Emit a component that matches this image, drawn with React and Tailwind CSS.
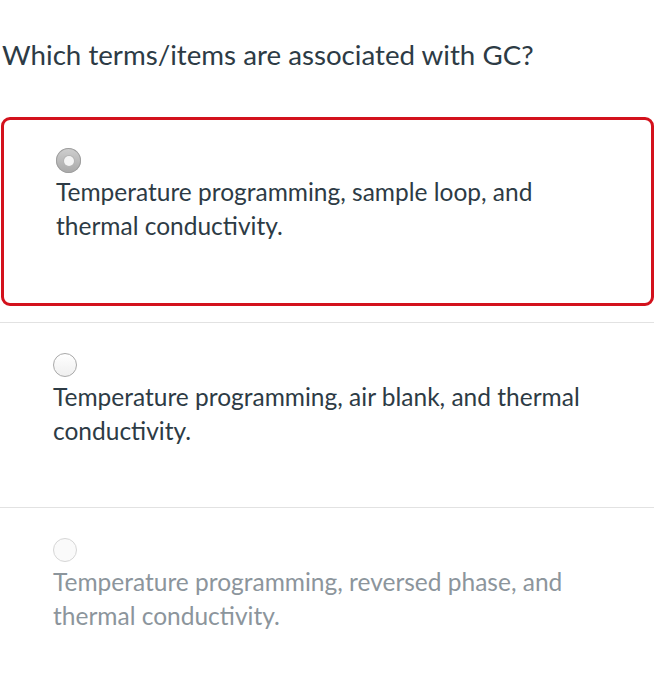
const answers = [
  { id: "a1", text: "Temperature programming, sample loop, and thermal conductivity.", state: "selected" },
  { id: "a2", text: "Temperature programming, air blank, and thermal conductivity.", state: "normal" },
  { id: "a3", text: "Temperature programming, reversed phase, and thermal conductivity.", state: "disabled" },
];

const Radio = ({ state }) => {
  if (state === "selected") {
    return (
      <div className="w-[25px] h-[25px] rounded-full bg-gradient-to-b from-[#cfcfcf] to-[#a9a9a9] flex items-center justify-center shadow-[inset_0_0_0_1px_#9e9e9e]">
        <div className="w-[10px] h-[10px] rounded-full bg-[#f4f4f4] shadow-[0_0_0_1px_#b5b5b5]" />
      </div>
    );
  }
  return (
    <div
      className={
        state === "disabled"
          ? "w-[24px] h-[24px] rounded-full bg-[#fafafa] border border-[#d6d6d6]"
          : "w-[24px] h-[24px] rounded-full bg-gradient-to-b from-white to-[#efefef] border border-[#a9a9a9]"
      }
    />
  );
};

export default function App() {
  return (
    <div className="w-[664px] min-h-[700px] bg-white font-['Lato','Open_Sans',sans-serif] text-[#2d3b45]">
      <h1 className="pl-[2px] pt-[35px] text-[27.7px] leading-[40px] font-normal">
        Which terms/items are associated with GC?
      </h1>

      <div className="mt-[42px] w-[654px]">
        {answers.map((a) =>
          a.state === "selected" ? (
            <div key={a.id} className="ml-[1px] mb-[16px] border-[3px] border-[#d3111c] rounded-[9px] pl-[52px] pt-[28px] pb-[60px]">
              <Radio state={a.state} />
              <p className="mt-[2px] pr-[90px] text-[24.5px] leading-[34px]">{a.text}</p>
            </div>
          ) : (
            <div key={a.id} className="border-t border-[#e2e2e2] pl-[53px] pt-[30px] pb-[59px]">
              <Radio state={a.state} />
              <p
                className={
                  a.state === "disabled"
                    ? "mt-[3px] pr-[70px] text-[24.5px] leading-[34px] text-[#8c959c]"
                    : "mt-[3px] pr-[70px] text-[24.5px] leading-[34px]"
                }
              >
                {a.text}
              </p>
            </div>
          )
        )}
      </div>
    </div>
  );
}
